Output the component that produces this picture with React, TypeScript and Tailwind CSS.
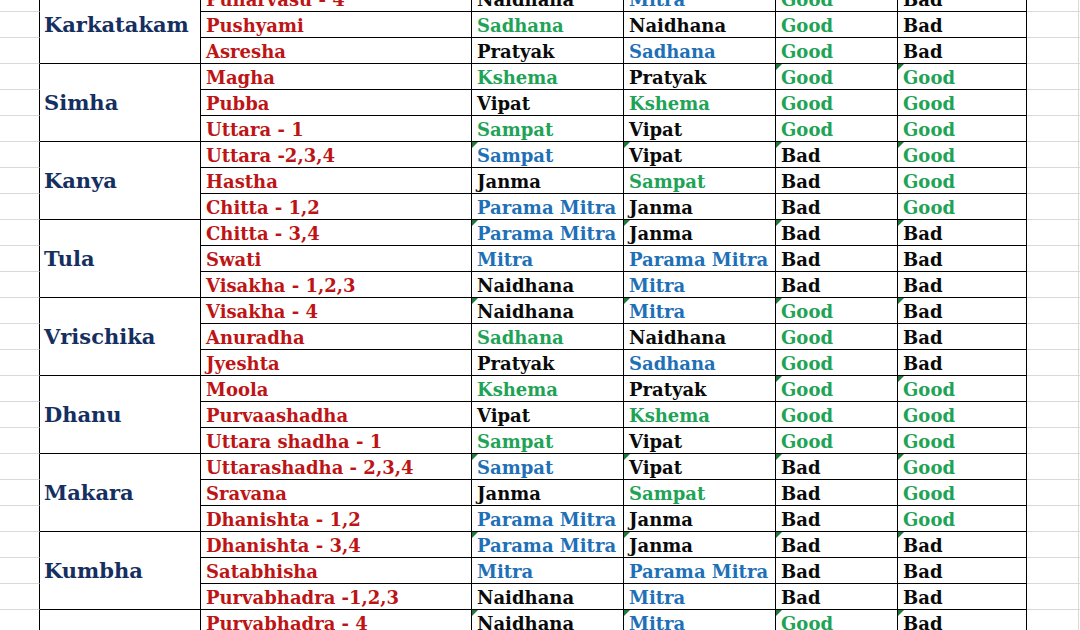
import React from "react";

type C = "k" | "g" | "b";
type Row = [string, string, C, string, C, string, string, number];

const colorCls: Record<C, string> = {
  k: "text-[#0a0a0a]",
  g: "text-[#1fa356]",
  b: "text-[#1f70b6]",
};

const groups: { rasi: string; rows: Row[] }[] = [
  {
    rasi: "Karkatakam",
    rows: [
      ["Punarvasu - 4", "Naidhana", "k", "Mitra", "b", "Good", "Bad", 2],
      ["Pushyami", "Sadhana", "g", "Naidhana", "k", "Good", "Bad", 0],
      ["Asresha", "Pratyak", "k", "Sadhana", "b", "Good", "Bad", 0],
    ],
  },
  {
    rasi: "Simha",
    rows: [
      ["Magha", "Kshema", "g", "Pratyak", "k", "Good", "Good", 1],
      ["Pubba", "Vipat", "k", "Kshema", "g", "Good", "Good", 0],
      ["Uttara - 1", "Sampat", "g", "Vipat", "k", "Good", "Good", 0],
    ],
  },
  {
    rasi: "Kanya",
    rows: [
      ["Uttara -2,3,4", "Sampat", "b", "Vipat", "k", "Bad", "Good", 2],
      ["Hastha", "Janma", "k", "Sampat", "g", "Bad", "Good", 0],
      ["Chitta - 1,2", "Parama Mitra", "b", "Janma", "k", "Bad", "Good", 0],
    ],
  },
  {
    rasi: "Tula",
    rows: [
      ["Chitta - 3,4", "Parama Mitra", "b", "Janma", "k", "Bad", "Bad", 2],
      ["Swati", "Mitra", "b", "Parama Mitra", "b", "Bad", "Bad", 0],
      ["Visakha - 1,2,3", "Naidhana", "k", "Mitra", "b", "Bad", "Bad", 0],
    ],
  },
  {
    rasi: "Vrischika",
    rows: [
      ["Visakha - 4", "Naidhana", "k", "Mitra", "b", "Good", "Bad", 2],
      ["Anuradha", "Sadhana", "g", "Naidhana", "k", "Good", "Bad", 0],
      ["Jyeshta", "Pratyak", "k", "Sadhana", "b", "Good", "Bad", 0],
    ],
  },
  {
    rasi: "Dhanu",
    rows: [
      ["Moola", "Kshema", "g", "Pratyak", "k", "Good", "Good", 1],
      ["Purvaashadha", "Vipat", "k", "Kshema", "g", "Good", "Good", 0],
      ["Uttara shadha - 1", "Sampat", "g", "Vipat", "k", "Good", "Good", 0],
    ],
  },
  {
    rasi: "Makara",
    rows: [
      ["Uttarashadha - 2,3,4", "Sampat", "b", "Vipat", "k", "Bad", "Good", 2],
      ["Sravana", "Janma", "k", "Sampat", "g", "Bad", "Good", 0],
      ["Dhanishta - 1,2", "Parama Mitra", "b", "Janma", "k", "Bad", "Good", 0],
    ],
  },
  {
    rasi: "Kumbha",
    rows: [
      ["Dhanishta - 3,4", "Parama Mitra", "b", "Janma", "k", "Bad", "Bad", 2],
      ["Satabhisha", "Mitra", "b", "Parama Mitra", "b", "Bad", "Bad", 0],
      ["Purvabhadra -1,2,3", "Naidhana", "k", "Mitra", "b", "Bad", "Bad", 0],
    ],
  },
  {
    rasi: "Meena",
    rows: [
      ["Purvabhadra - 4", "Naidhana", "k", "Mitra", "b", "Good", "Bad", 2],
      ["Uttarabhadra", "Sadhana", "g", "Naidhana", "k", "Good", "Bad", 0],
      ["Revati", "Pratyak", "k", "Sadhana", "b", "Good", "Bad", 0],
    ],
  },
];

function Tri() {
  return (
    <span className="absolute left-0 top-0 w-0 h-0 border-t-[6px] border-r-[6px] border-t-[#1e7a3a] border-r-transparent" />
  );
}

function Cell({
  w,
  cls,
  tri,
  children,
}: {
  w: string;
  cls: string;
  tri?: boolean;
  children?: React.ReactNode;
}) {
  return (
    <div
      className={`relative ${w} shrink-0 h-[26px] border-b border-r border-black flex items-end pl-[5px] pb-[1px] leading-[20px] whitespace-nowrap overflow-hidden ${cls}`}
    >
      {tri && <Tri />}
      {children}
    </div>
  );
}

function GrayCell({ w }: { w: string }) {
  return <div className={`${w} shrink-0 h-[26px] border-b border-r border-[#d9d9d9]`} />;
}

export default function App() {
  return (
    <div className="w-[1080px] h-[630px] overflow-hidden bg-white font-['DejaVu_Serif',serif] font-bold text-[18px]">
      <div className="-mt-[14px] flex flex-col">
        {groups.map((g) => (
          <div key={g.rasi} className="flex">
            <div className="flex flex-col">
              {g.rows.map((_, i) => (
                <div
                  key={i}
                  className="w-[40px] h-[26px] border-b border-b-[#d9d9d9] border-r border-r-black"
                />
              ))}
            </div>
            <div className="w-[161px] shrink-0 border-b border-r border-black flex items-center pl-[4px] text-[21px] text-[#142f60]">
              {g.rasi}
            </div>
            <div className="flex flex-col">
              {g.rows.map((r, i) => {
                const [nak, d, dc, e, ec, f, gg, tri] = r;
                return (
                  <div key={i} className="flex">
                    <Cell w="w-[271px]" cls="text-[#bd1515]">
                      {nak}
                    </Cell>
                    <Cell w="w-[152px]" cls={colorCls[dc]} tri={tri === 2}>
                      {d}
                    </Cell>
                    <Cell w="w-[152px]" cls={colorCls[ec]} tri={tri === 2}>
                      {e}
                    </Cell>
                    <Cell
                      w="w-[122px]"
                      cls={f === "Good" ? colorCls.g : colorCls.k}
                      tri={tri > 0}
                    >
                      {f}
                    </Cell>
                    <Cell
                      w="w-[129px]"
                      cls={gg === "Good" ? colorCls.g : colorCls.k}
                      tri={tri > 0}
                    >
                      {gg}
                    </Cell>
                    <GrayCell w="w-[52px]" />
                    <GrayCell w="w-[80px]" />
                  </div>
                );
              })}
            </div>
          </div>
        ))}
      </div>
    </div>
  );
}
